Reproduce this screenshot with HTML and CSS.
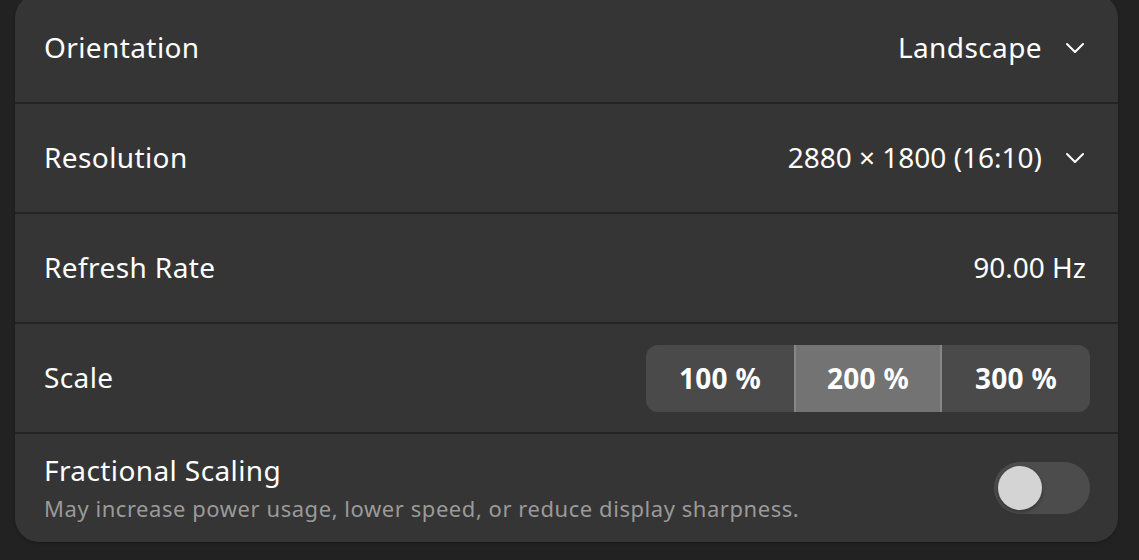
FILE: index.html
```html
<!DOCTYPE html>
<html>
<head>
<meta charset="utf-8">
<link rel="stylesheet" href="styles.css">
</head>
<body>
<div class="card">
  <div class="row">
    <span class="label">Orientation</span>
    <div class="value"><span>Landscape</span>
      <svg class="chev" width="22" height="14" viewBox="0 0 22 14"><path d="M3 3 L11 11 L19 3" fill="none" stroke="#fff" stroke-width="2" stroke-linecap="round" stroke-linejoin="round"/></svg>
    </div>
  </div>
  <div class="row">
    <span class="label">Resolution</span>
    <div class="value"><span class="num">2880 × 1800 (16:10)</span>
      <svg class="chev" width="22" height="14" viewBox="0 0 22 14"><path d="M3 3 L11 11 L19 3" fill="none" stroke="#fff" stroke-width="2" stroke-linecap="round" stroke-linejoin="round"/></svg>
    </div>
  </div>
  <div class="row">
    <span class="label">Refresh Rate</span>
    <div class="value"><span class="num">90.00 Hz</span></div>
  </div>
  <div class="row">
    <span class="label">Scale</span>
    <div class="linked">
      <button class="seg">100 %</button>
      <button class="seg active">200 %</button>
      <button class="seg">300 %</button>
    </div>
  </div>
  <div class="row last">
    <div class="titles">
      <span class="label">Fractional Scaling</span>
      <span class="sub">May increase power usage, lower speed, or reduce display sharpness.</span>
    </div>
    <div class="switch"><div class="knob"></div></div>
  </div>
</div>
</body>
</html>
```

FILE: styles.css
```css
html, body {
  margin: 0;
  padding: 0;
  background: #222222;
  width: 1139px;
  height: 560px;
  overflow: hidden;
  font-family: "Noto Sans", "Open Sans", sans-serif;
  color: #ffffff;
}
.card {
  margin: -6px 0 0 15px;
  width: 1103px;
  background: #353535;
  border-radius: 24px;
  overflow: hidden;
  box-shadow: 0 1px 3px rgba(0,0,0,0.3);
}
.row {
  height: 108px;
  display: flex;
  align-items: center;
  justify-content: space-between;
  padding: 0 28px 0 29px;
  border-bottom: 2px solid #242424;
  box-sizing: content-box;
}
.row.last {
  border-bottom: none;
}
.label {
  font-size: 28px;
  letter-spacing: 0.4px;
  color: #ffffff;
  margin-top: -2px;
}
.value {
  display: flex;
  align-items: center;
  gap: 22px;
  font-size: 28px;
  letter-spacing: 0.4px;
  margin-right: 4px;
  margin-top: -2px;
}
.num {
  letter-spacing: 0;
}
.chev {
  display: block;
  margin-top: 2px;
}
.linked {
  display: flex;
  border-radius: 12px;
  overflow: hidden;
}
.seg {
  width: 148px;
  height: 67px;
  border: none;
  background: #4a4a4a;
  color: #ffffff;
  font-family: "Noto Sans", "Open Sans", sans-serif;
  font-weight: bold;
  font-size: 28px;
  letter-spacing: 0.3px;
  padding: 0;
}
.seg.active {
  background: #737373;
  box-shadow: inset 2px 0 0 #878787, inset -2px 0 0 #878787;
}
.titles {
  display: flex;
  flex-direction: column;
  gap: 4px;
  margin-top: -2px;
}
.titles .label {
  margin-top: 0;
}
.sub {
  font-size: 22px;
  letter-spacing: 0.55px;
  color: #9a9a9a;
}
.switch {
  width: 96px;
  height: 52px;
  border-radius: 26px;
  background: #4c4c4c;
  display: flex;
  align-items: center;
  padding: 0 4px;
  box-sizing: border-box;
}
.knob {
  width: 44px;
  height: 44px;
  border-radius: 50%;
  background: #d4d4d4;
  box-shadow: 0 2px 4px rgba(0,0,0,0.35);
}
```
